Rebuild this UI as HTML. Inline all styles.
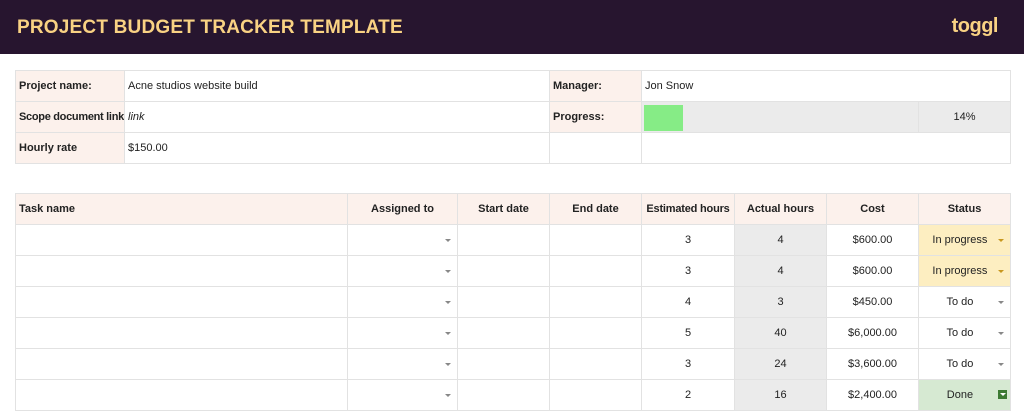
<!DOCTYPE html><html><head><style>
body{margin:0;width:1024px;height:409px;overflow:hidden;background:#fff;font-family:"Liberation Sans",Arial,sans-serif;font-size:11px;color:#222}
.hdr{height:54px;background:#27152f;position:relative}
.hdr .t{position:absolute;left:17px;top:17px;color:#f9d283;font-weight:bold;font-size:19px;letter-spacing:0.2px}
.hdr .l{position:absolute;right:26px;top:15px;color:#f9d283;font-weight:bold;font-size:20px;letter-spacing:-0.5px}
table{border-collapse:collapse;table-layout:fixed;position:absolute;left:15px}
td{border:1px solid #e2e2e2;height:31px;padding:0 3px;white-space:nowrap;overflow:hidden;box-sizing:border-box}
.lb{background:#fcf1ec;font-weight:bold}
.lb1{letter-spacing:-0.3px}
.c{text-align:center}
.g{background:#ebebeb}
.ip{background:#fdeec1}
.dn{background:#d6e9d2}
.ar{position:relative}
.ar:after{content:"";position:absolute;right:6px;top:14px;border:3px solid transparent;border-top:3px solid #888;border-bottom:0}
.ip.ar:after{border-top-color:#c8971e}
.dn.ar:after{display:none}
.box{position:absolute;right:3px;top:10px;width:9px;height:9px;background:#3d7a33}
.box:after{content:"";position:absolute;left:1.5px;top:3px;border:3px solid transparent;border-top:3px solid #fff;border-bottom:0}
</style></head><body>
<div class="hdr"><div class="t">PROJECT BUDGET TRACKER TEMPLATE</div><div class="l">toggl</div></div>
<table style="top:70px;width:995px">
<colgroup><col style="width:109px"><col style="width:425px"><col style="width:92px"><col style="width:277px"><col style="width:92px"></colgroup>
<tr><td class="lb">Project name:</td><td>Acne studios website build</td><td class="lb">Manager:</td><td colspan="2">Jon Snow</td></tr>
<tr><td class="lb lb1">Scope document link:</td><td><i>link</i></td><td class="lb">Progress:</td><td class="g" style="padding:2px 2px 0"><div style="width:39px;height:26px;background:#86ec86"></div></td><td class="g c">14%</td></tr>
<tr><td class="lb">Hourly rate</td><td>$150.00</td><td></td><td colspan="2"></td></tr>
</table>
<table style="top:193px;width:995px">
<colgroup><col style="width:332px"><col style="width:110px"><col style="width:92px"><col style="width:92px"><col style="width:93px"><col style="width:92px"><col style="width:92px"><col style="width:92px"></colgroup>
<tr class="lb"><td>Task name</td><td class="c">Assigned to</td><td class="c">Start date</td><td class="c">End date</td><td class="c" style="letter-spacing:-0.2px">Estimated hours</td><td class="c">Actual hours</td><td class="c">Cost</td><td class="c">Status</td></tr>
<tr><td></td><td class="ar"></td><td></td><td></td><td class="c">3</td><td class="c g">4</td><td class="c">$600.00</td><td class="ip ar c">In progress&nbsp;&nbsp;&nbsp;</td></tr>
<tr><td></td><td class="ar"></td><td></td><td></td><td class="c">3</td><td class="c g">4</td><td class="c">$600.00</td><td class="ip ar c">In progress&nbsp;&nbsp;&nbsp;</td></tr>
<tr><td></td><td class="ar"></td><td></td><td></td><td class="c">4</td><td class="c g">3</td><td class="c">$450.00</td><td class="ar c">To do&nbsp;&nbsp;&nbsp;</td></tr>
<tr><td></td><td class="ar"></td><td></td><td></td><td class="c">5</td><td class="c g">40</td><td class="c">$6,000.00</td><td class="ar c">To do&nbsp;&nbsp;&nbsp;</td></tr>
<tr><td></td><td class="ar"></td><td></td><td></td><td class="c">3</td><td class="c g">24</td><td class="c">$3,600.00</td><td class="ar c">To do&nbsp;&nbsp;&nbsp;</td></tr>
<tr><td></td><td class="ar"></td><td></td><td></td><td class="c">2</td><td class="c g">16</td><td class="c">$2,400.00</td><td class="dn ar c">Done&nbsp;&nbsp;&nbsp;<span class="box"></span></td></tr>
</table>
</body></html>
